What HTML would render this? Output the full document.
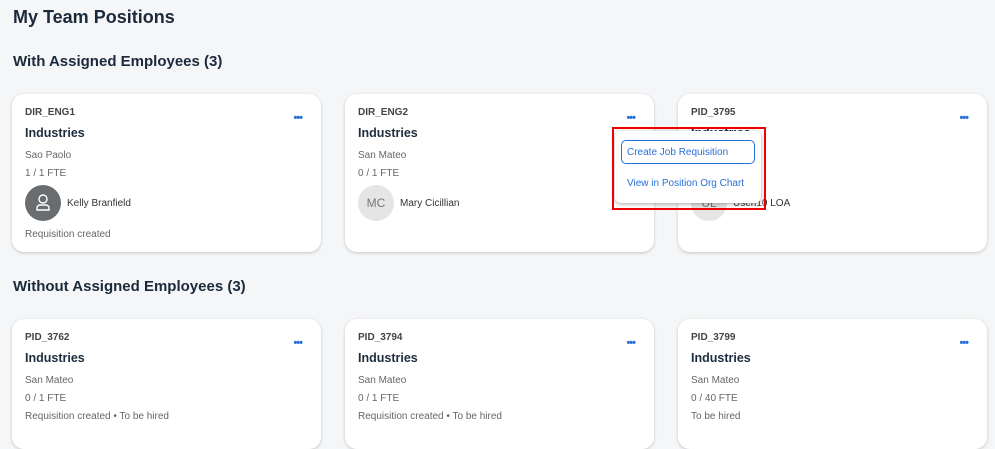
<!DOCTYPE html>
<html><head><style>
body{margin:0;width:995px;height:434px;background:#f5f6f7;font-family:"Liberation Sans",sans-serif;position:relative;overflow:hidden;color:#1d2d3e}
.a{position:absolute;white-space:nowrap}
h1{position:absolute;left:13px;top:7px;margin:0;font-size:18px;font-weight:bold;color:#1a2a3c}
h2{position:absolute;left:13px;margin:0;font-size:15px;font-weight:bold;color:#1a2a3c}
.card{position:absolute;width:309px;background:#fff;border-radius:12px;box-shadow:0 1px 3px rgba(0,0,0,.2)}
.id{position:absolute;left:13px;top:13px;font-size:10px;font-weight:bold;color:#444}
.ind{position:absolute;left:13px;top:32px;font-size:12.5px;font-weight:bold;color:#1d2d3e}
.l{position:absolute;left:13px;font-size:10px;color:#666}
.dots{position:absolute;right:19px;top:18px;color:#2a6fd6;font-size:11px;font-weight:bold;letter-spacing:-1px}
.av{position:absolute;left:13px;top:91px;width:36px;height:36px;border-radius:50%;background:#e5e5e5;color:#777;font-size:12px;text-align:center;line-height:36px}
.nm{position:absolute;left:55px;top:104px;font-size:10px;color:#333}
</style></head><body>
<h1>My Team Positions</h1>
<h2 style="top:53px">With Assigned Employees (3)</h2>
<h2 style="top:278px">Without Assigned Employees (3)</h2>

<div class="card" style="left:12px;top:94px;height:158px">
<div class="id">DIR_ENG1</div><div class="dots">•••</div><div class="ind">Industries</div>
<div class="l" style="top:56px">Sao Paolo</div><div class="l" style="top:74px">1 / 1 FTE</div>
<div class="av" style="background:#6a6d70"><svg width="36" height="36" viewBox="0 0 36 36"><circle cx="18" cy="14" r="4" fill="none" stroke="#fff" stroke-width="1.4"/><path d="M12 25v-2a3 3 0 0 1 3-3h6a3 3 0 0 1 3 3v2z" fill="none" stroke="#fff" stroke-width="1.4"/></svg></div>
<div class="nm">Kelly Branfield</div>
<div class="l" style="top:135px">Requisition created</div></div>

<div class="card" style="left:345px;top:94px;height:158px">
<div class="id">DIR_ENG2</div><div class="dots">•••</div><div class="ind">Industries</div>
<div class="l" style="top:56px">San Mateo</div><div class="l" style="top:74px">0 / 1 FTE</div>
<div class="av">MC</div><div class="nm">Mary Cicillian</div></div>

<div class="card" style="left:678px;top:94px;height:158px">
<div class="id">PID_3795</div><div class="dots">•••</div><div class="ind">Industries</div>
<div class="av">UL</div><div class="nm">Userl10 LOA</div></div>

<div class="a" style="left:615px;top:131px;width:146px;height:72px;background:#fff;border-radius:6px;box-shadow:0 1px 4px rgba(0,0,0,.35)"></div>
<div class="a" style="left:621px;top:140px;width:132px;height:22px;border:1.5px solid #2a6fd6;border-radius:5px;"></div>
<div class="a" style="left:627px;top:147px;font-size:10px;color:#2a6fd6">Create Job Requisition</div>
<div class="a" style="left:627px;top:178px;font-size:10px;color:#2a6fd6">View in Position Org Chart</div>
<div class="a" style="left:612px;top:127px;width:150px;height:79px;border:2px solid #e00"></div>

<div class="card" style="left:12px;top:319px;height:130px">
<div class="id">PID_3762</div><div class="dots">•••</div><div class="ind">Industries</div>
<div class="l" style="top:56px">San Mateo</div><div class="l" style="top:74px">0 / 1 FTE</div>
<div class="l" style="top:92px">Requisition created • To be hired</div></div>
<div class="card" style="left:345px;top:319px;height:130px">
<div class="id">PID_3794</div><div class="dots">•••</div><div class="ind">Industries</div>
<div class="l" style="top:56px">San Mateo</div><div class="l" style="top:74px">0 / 1 FTE</div>
<div class="l" style="top:92px">Requisition created • To be hired</div></div>
<div class="card" style="left:678px;top:319px;height:130px">
<div class="id">PID_3799</div><div class="dots">•••</div><div class="ind">Industries</div>
<div class="l" style="top:56px">San Mateo</div><div class="l" style="top:74px">0 / 40 FTE</div>
<div class="l" style="top:92px">To be hired</div></div>
</body></html>
